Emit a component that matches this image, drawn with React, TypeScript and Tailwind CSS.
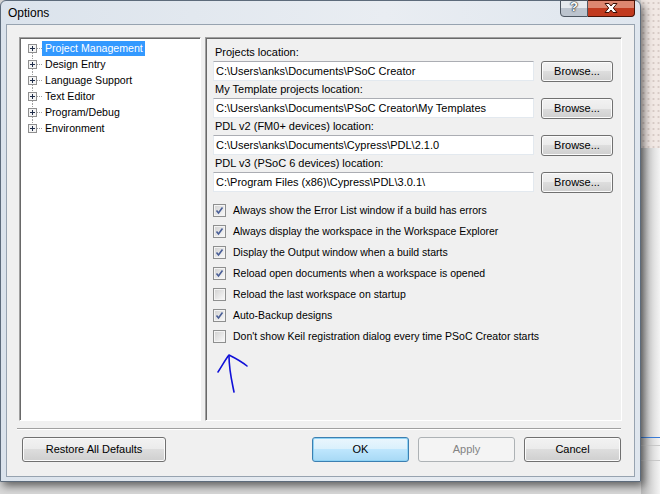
import React from 'react'

const font = { fontFamily: '"Liberation Sans", Arial, sans-serif' }

const treeItems = ['Project Management', 'Design Entry', 'Language Support', 'Text Editor', 'Program/Debug', 'Environment']

const locations = [
  { label: 'Projects location:', value: 'C:\\Users\\anks\\Documents\\PSoC Creator' },
  { label: 'My Template projects location:', value: 'C:\\Users\\anks\\Documents\\PSoC Creator\\My Templates' },
  { label: 'PDL v2 (FM0+ devices) location:', value: 'C:\\Users\\anks\\Documents\\Cypress\\PDL\\2.1.0' },
  { label: 'PDL v3 (PSoC 6 devices) location:', value: 'C:\\Program Files (x86)\\Cypress\\PDL\\3.0.1\\' },
]

const options = [
  { label: 'Always show the Error List window if a build has errors', checked: true },
  { label: 'Always display the workspace in the Workspace Explorer', checked: true },
  { label: 'Display the Output window when a build starts', checked: true },
  { label: 'Reload open documents when a workspace is opened', checked: true },
  { label: 'Reload the last workspace on startup', checked: false },
  { label: 'Auto-Backup designs', checked: true },
  { label: "Don't show Keil registration dialog every time PSoC Creator starts", checked: false },
]

function TreeRow({ text, first, last, selected }: { text: string; first: boolean; last: boolean; selected: boolean }) {
  return (
    <div className="flex h-[16px] items-center">
      <svg width="22" height="16" className="shrink-0">
        {!first && <line x1="12.5" y1="0" x2="12.5" y2="4" stroke="#a0a0a0" strokeDasharray="1 1" />}
        {!last && <line x1="12.5" y1="13" x2="12.5" y2="16" stroke="#a0a0a0" strokeDasharray="1 1" />}
        <line x1="17" y1="8.5" x2="22" y2="8.5" stroke="#a0a0a0" strokeDasharray="1 1" />
        <rect x="8.5" y="4.5" width="8" height="8" fill="#f4f4f4" stroke="#8f8f8f" />
        <line x1="10" y1="8.5" x2="15" y2="8.5" stroke="#1f2d4a" />
        <line x1="12.5" y1="6" x2="12.5" y2="11" stroke="#1f2d4a" />
      </svg>
      <span className={`h-[15px] pl-[3px] pr-[2px] text-[10.6px] leading-[15px] ${selected ? 'bg-[#3399ff] text-white' : 'text-black'}`}>{text}</span>
    </div>
  )
}

function Checkbox({ checked }: { checked: boolean }) {
  return (
    <div className="flex h-[13px] w-[13px] shrink-0 items-center justify-center border border-[#8e8f8f] bg-white">
      <div className="flex h-[11px] w-[11px] items-center justify-center border border-[#f4f4f4] bg-gradient-to-br from-[#d4d4d4] to-[#f7f7f7]">
        {checked && (
          <svg width="9" height="9" viewBox="0 0 9 9">
            <path d="M1.5 4.5 L3.5 7 L7.5 1.5" fill="none" stroke="#4a5f97" strokeWidth="1.6" />
          </svg>
        )}
      </div>
    </div>
  )
}

function Button({ children, className = '', variant = 'normal' }: { children: React.ReactNode; className?: string; variant?: 'normal' | 'default' | 'disabled' }) {
  const look =
    variant === 'default'
      ? 'border-[#3c7fb1] bg-[linear-gradient(#eaf6fd_0%,#d9f0fc_50%,#bee6fd_50%,#a7d9f5_100%)] text-black shadow-[inset_0_0_0_1px_#8fd3f5]'
      : variant === 'disabled'
        ? 'border-[#adb2b5] bg-[#f4f4f4] text-[#838383]'
        : 'border-[#707070] bg-[linear-gradient(#f2f2f2_0%,#ebebeb_50%,#dddddd_50%,#cfcfcf_100%)] text-black shadow-[inset_0_0_0_1px_#fbfbfb]'
  return (
    <div className={`flex items-center justify-center rounded-[3px] border text-[11px] ${look} ${className}`}>{children}</div>
  )
}

export default function App() {
  return (
    <div className="flex h-[494px] w-[660px] overflow-hidden bg-[#d8d8d8]" style={font}>
      <div className="relative z-10 flex h-[482px] w-[641px] shrink-0 flex-col rounded-t-[6px] border border-[#5d6b7b] bg-[linear-gradient(90deg,#dbe3ec,#e9edf2_60%,#dfe6ee)] px-[5px] pb-[4px] shadow-[3px_4px_8px_rgba(0,0,0,0.55)]">
        <div className="flex h-[23px] shrink-0 items-start">
          <span className="mt-[3px] ml-[2px] text-[12px] text-black">Options</span>
          <div className="ml-auto -mt-px flex h-[17px] w-[75px] shrink-0">
            <div className="flex h-[17px] w-[28px] shrink-0 flex-col overflow-hidden rounded-bl-[4px] border border-[#4d5661] bg-[#bcc4ce]">
              <div className="h-[7px] bg-[#e6eaee]" />
              <div className="flex flex-1 items-start justify-center">
                <span className="-mt-[8px] text-[13px] font-bold leading-[13px] text-white [text-shadow:0_0_1px_#1e2228,0_0_1px_#1e2228,0_0_2px_#1e2228]">?</span>
              </div>
            </div>
            <div className="flex h-[17px] w-[47px] shrink-0 flex-col overflow-hidden rounded-br-[4px] border border-l-0 border-[#4a1206] bg-[#c13a1f]">
              <div className="h-[7px] bg-[#dd8670]" />
              <div className="flex flex-1 items-start justify-center">
                <svg className="-mt-[6px]" width="16" height="12" viewBox="0 0 16 12">
                  <path d="M2 1.5 H6 L8 4 L10 1.5 H14 L10.3 6 L14 10.5 H10 L8 8 L6 10.5 H2 L5.7 6 Z" fill="#ffffff" stroke="#3a0e05" strokeWidth="1" strokeLinejoin="round" />
                </svg>
              </div>
            </div>
          </div>
        </div>
        <div className="flex flex-1 flex-col border border-[#97a3b0] bg-[#f0f0f0]">
          <div className="flex h-[384px] gap-[4px] px-[12px] pt-[12px] box-content">
            <div className="w-[182px] border border-[#a0a0a0] border-r-white border-b-white bg-white pt-[2px] shadow-[inset_1px_1px_0_#696969]">
              {treeItems.map((t, i) => (
                <TreeRow key={t} text={t} first={i === 0} last={i === treeItems.length - 1} selected={i === 0} />
              ))}
            </div>
            <div className="relative flex-1 border border-[#a0a0a0] border-r-white border-b-white pl-[8px] pr-[7px] pt-[7px] shadow-[inset_1px_1px_0_#696969]">
              {locations.map((l) => (
                <div key={l.label} className="h-[37px]">
                  <div className="ml-px h-[15px] text-[11px] leading-[15px] text-black">{l.label}</div>
                  <div className="flex h-[22px] items-center gap-[7px]">
                    <div className="flex h-[20px] w-[321px] -ml-px items-center border border-[#e3e9ef] border-t-[#abadb3] bg-white pl-[2px] text-[11px] text-black whitespace-nowrap overflow-hidden">
                      {l.value}
                    </div>
                    <Button className="h-[21px] w-[72px]">Browse...</Button>
                  </div>
                </div>
              ))}
              <div className="mt-[7px]">
                {options.map((o) => (
                  <div key={o.label} className="flex h-[21px] items-center gap-[7px] -ml-px">
                    <Checkbox checked={o.checked} />
                    <span className="text-[10.5px] text-black whitespace-nowrap">{o.label}</span>
                  </div>
                ))}
              </div>
              <svg className="absolute left-[7px] top-[310px]" width="40" height="46" viewBox="0 0 40 46">
                <path d="M21 44 C19 34 16 22 16 8" fill="none" stroke="#1010d8" strokeWidth="1.6" strokeLinecap="round" />
                <path d="M5 24 C9 18 12 12 16 7 C22 10 28 13 34 18" fill="none" stroke="#1010d8" strokeWidth="1.6" strokeLinecap="round" strokeLinejoin="round" />
              </svg>
            </div>
          </div>
          <div className="mt-[7px] ml-[10px] mr-[13px] h-[2px] border-t border-[#a0a0a0] border-b border-b-white" />
          <div className="mt-[7px] flex h-[25px] gap-[9px] pl-[15px] pr-[13px]">
            <Button className="w-[144px]">Restore All Defaults</Button>
            <div className="flex-1" />
            <Button className="w-[97px]" variant="default">OK</Button>
            <Button className="w-[97px]" variant="disabled">Apply</Button>
            <Button className="w-[97px]">Cancel</Button>
          </div>
        </div>
      </div>
      <div className="flex flex-1 flex-col">
        <div className="h-[148px] bg-[#f1e8e4] bg-[radial-gradient(circle,#d7cbc6_1px,transparent_1.2px)] bg-[length:5px_6px]" />
        <div className="flex-1 bg-[linear-gradient(90deg,#b8b8b8,#f4f4f4)]">
          <div className="mt-[289px] h-px bg-[#3a7bd5]" />
          <div className="mt-[7px] h-px bg-[#c8c8c8]" />
          <div className="mt-[14px] h-px bg-[#c8c8c8]" />
        </div>
      </div>
    </div>
  )
}
